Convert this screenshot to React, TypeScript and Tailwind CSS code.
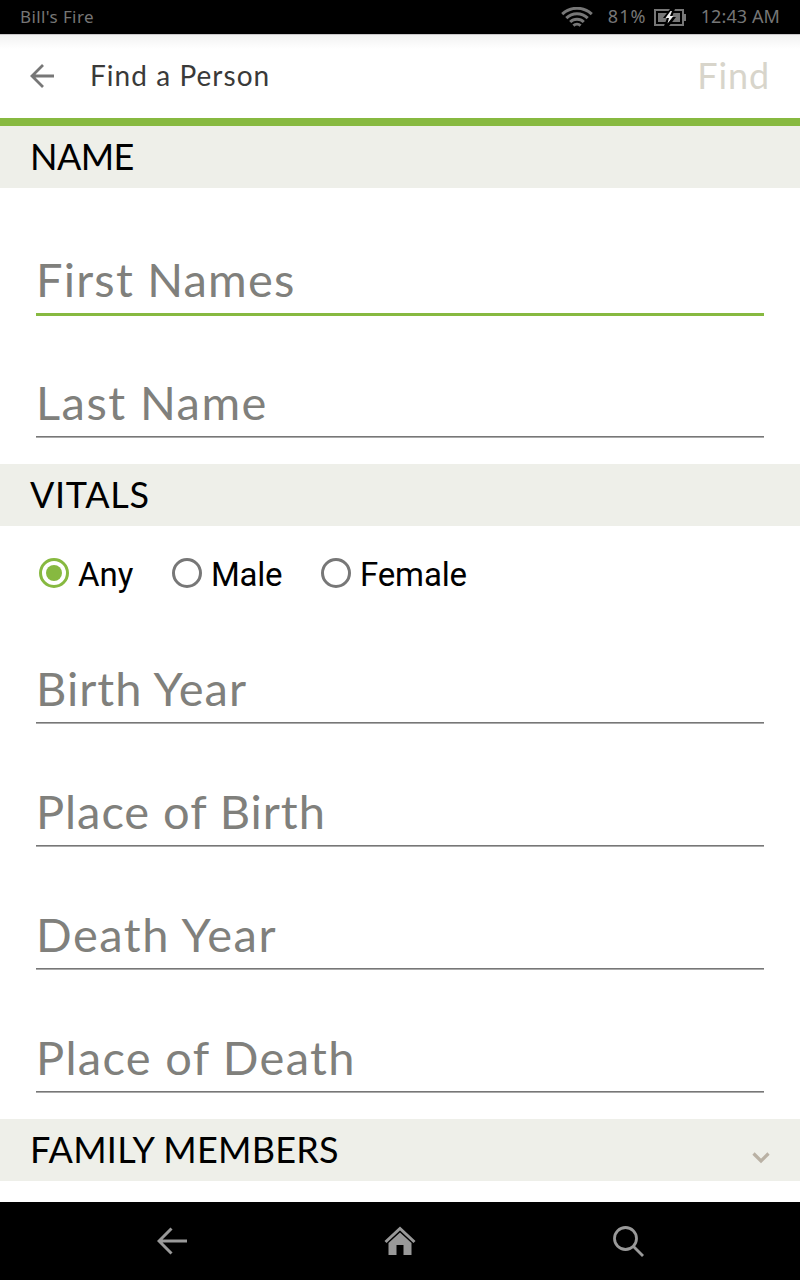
import { useState } from 'react';
import { clsx } from 'clsx';

const genders = [
  { name: 'Any', width: 'w-[133px]', tracking: 'tracking-[0px]' },
  { name: 'Male', width: 'w-[149px]', tracking: 'tracking-[-0.3px]' },
  { name: 'Female', width: 'w-[160px]', tracking: 'tracking-[-0.15px]' },
];

function StatusBar() {
  return (
    <div className="h-[34px] bg-black flex items-center justify-between px-5 font-['Noto_Sans'] text-[#767676]">
      <span className="text-[17px] leading-[34px] tracking-[0.4px]">Bill's Fire</span>
      <div className="flex items-center">
        <svg className="w-8 h-5 mr-[15px] -mt-px" viewBox="0 0 32 20" fill="none" stroke="#777" strokeWidth="3">
          <path d="M1.2 7.2C9.5-.7 22.5-.7 30.8 7.2" />
          <path d="M5.3 11.2c6-5.8 15.4-5.8 21.4 0" />
          <path d="M9.2 15c3.8-3.7 9.8-3.7 13.6 0" />
          <path d="M12.4 18.6c2-1.8 5.2-1.8 7.2 0" />
        </svg>
        <span className="text-[18px] leading-[32px] tracking-[1.1px] -mt-0.5">81%</span>
        <svg className="w-8 h-[17px] ml-[7px] mr-[15px]" viewBox="0 0 32 17">
          <path d="M1 1h28v15H1z" fill="none" stroke="#777" strokeWidth="2" />
          <path d="M4 4h22v9H4zM30 5h2v7h-2z" fill="#777" />
          <path d="M16 0 9 9h4l-3 8h5l7-9h-4l3-8z" fill="#000" />
          <path d="M16.5 2 11.5 9H15l-1.5 5.5L19.5 7H16l2-5z" fill="#eee" />
        </svg>
        <span className="text-[18px] leading-[32px] tracking-[0.1px] -mt-0.5">12:43 AM</span>
      </div>
    </div>
  );
}

function Section({ title, tracking, open = true }: { title: string; tracking: string; open?: boolean }) {
  return (
    <div className="h-[62px] bg-[#eeefe9] px-[30px] flex items-center justify-between">
      <h2 className={clsx('text-[36px] leading-[60px] pb-0.5 text-black', tracking)}>{title}</h2>
      {!open && (
        <svg className="w-[18px] h-3 mt-[15px]" viewBox="0 0 18 12" fill="none" stroke="#b9b1a4" strokeWidth="3.2">
          <path d="M1.5 1.5 9 9l7.5-7.5" />
        </svg>
      )}
    </div>
  );
}

function Field({ label, tracking, focused }: { label: string; tracking: string; focused?: boolean }) {
  return (
    <div className="h-[123px] mx-9 flex flex-col justify-end">
      <label className={clsx('text-[47px] leading-[60px] pb-1 text-[#80807c] whitespace-nowrap', tracking)}>
        {label}
      </label>
      {focused ? (
        <div className="h-[3px] -mb-px bg-[#87b940]" />
      ) : (
        <div className="h-[2px] border-t border-[#777] bg-[#aaa]" />
      )}
    </div>
  );
}

export default function App() {
  const [gender, setGender] = useState('Any');

  return (
    <div className="w-[800px] h-[1280px] overflow-hidden bg-white flex flex-col font-[Lato,sans-serif]">
      <StatusBar />

      <header className="h-[92px] border-b-8 border-[#87b940] border-t border-t-[#c9c7c9] bg-linear-to-b from-[#f2f2f2] to-white to-[14px] flex items-center px-[30px] pb-[3px]">
        <svg className="w-6 h-6 mt-0.5" viewBox="0 0 24 24" fill="none" stroke="#777" strokeWidth="2.8">
          <path d="M24 12H2M13 1 2 12l11 11" />
        </svg>
        <h1 className="ml-9 text-[28px] leading-[40px] tracking-[1.05px] text-[#3a3a39]">Find a Person</h1>
        <button className="ml-auto text-[36px] leading-[40px] tracking-[0.9px] text-[#d8d5cb]">Find</button>
      </header>

      <Section title="NAME" tracking="tracking-[-0.6px]" />
      <div className="pt-1 pb-[26px]">
        <Field label="First Names" tracking="tracking-[1.2px]" focused />
        <Field label="Last Name" tracking="tracking-[1.45px]" />
      </div>

      <Section title="VITALS" tracking="tracking-[0.7px]" />
      <div className="pb-[26px]">
        <div className="h-[75px] pl-[39px] pt-[25px] flex items-start font-[Roboto,sans-serif]">
          {genders.map((g) => (
            <button
              key={g.name}
              onClick={() => setGender(g.name)}
              className={clsx('flex items-center gap-[9px] text-[33px] leading-[44px] text-black', g.width, g.tracking)}
            >
              <span
                className={clsx(
                  'size-[30px] shrink-0 rounded-full border-3 flex items-center justify-center',
                  gender === g.name ? 'border-[#87b940]' : 'border-[#777]'
                )}
              >
                {gender === g.name && <span className="size-4 rounded-full bg-[#87b940]" />}
              </span>
              <span className="mt-0.5 -mb-0.5">{g.name}</span>
            </button>
          ))}
        </div>
        <Field label="Birth Year" tracking="tracking-[1px]" />
        <Field label="Place of Birth" tracking="tracking-[0.95px]" />
        <Field label="Death Year" tracking="tracking-[1.5px]" />
        <Field label="Place of Death" tracking="tracking-[1.3px]" />
      </div>

      <Section title="FAMILY MEMBERS" tracking="tracking-[0.25px]" open={false} />

      {/* Device navigation */}
      <nav className="mt-auto h-[78px] bg-black flex items-center justify-between pl-[157px] pr-[156px]">
        <svg className="w-[30px] h-[28px]" viewBox="0 0 30 28" fill="none" stroke="#999" strokeWidth="3">
          <path d="M30 14H2M14.5 1.5 2 14l12.5 12.5" />
        </svg>
        <svg className="w-8 h-[30px]" viewBox="0 0 32 30">
          <path d="M1.5 16 16 2.5 30.5 16" fill="none" stroke="#999" strokeWidth="3" />
          <path d="M16 6.5 27.5 17v12h-8V19h-7v10h-8V17z" fill="#999" />
        </svg>
        <svg className="w-[31px] h-[31px]" viewBox="0 0 31 31" fill="none" stroke="#999" strokeWidth="2.8">
          <circle cx="12.5" cy="12.5" r="11" />
          <path d="m20.5 20.5 9.5 9.5" />
        </svg>
      </nav>
    </div>
  );
}
